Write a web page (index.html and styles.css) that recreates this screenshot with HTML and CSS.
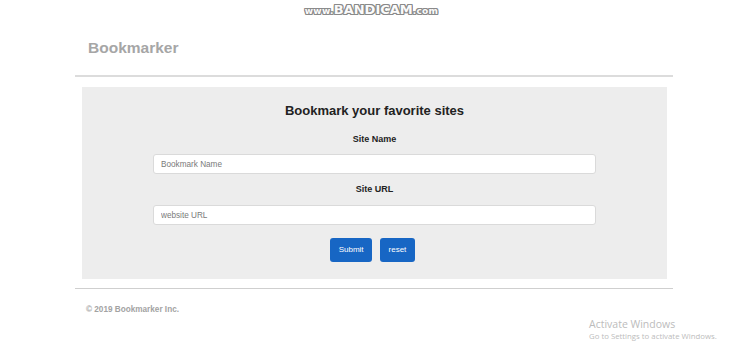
FILE: index.html
```html
<!DOCTYPE html>
<html lang="en">
<head>
<meta charset="utf-8">
<title>Bookmarker</title>
<link rel="stylesheet" href="styles.css">
</head>
<body>
  <div class="watermark"><span class="wm-small">www.</span>BANDICAM<span class="wm-small">.com</span></div>
  <div class="container">
    <header class="header">
      <h3 class="brand">Bookmarker</h3>
    </header>
    <div class="panel">
      <h2 class="panel-title">Bookmark your favorite sites</h2>
      <form class="form">
        <label class="label">Site Name</label>
        <input class="field" type="text" placeholder="Bookmark Name">
        <label class="label">Site URL</label>
        <input class="field" type="text" placeholder="website URL">
        <div class="actions">
          <button type="button" class="btn">Submit</button>
          <button type="button" class="btn">reset</button>
        </div>
      </form>
    </div>
    <footer class="footer">
      <p class="copy">&copy; 2019 Bookmarker Inc.</p>
    </footer>
  </div>
  <div class="activate">
    <div class="act-title">Activate Windows</div>
    <div class="act-sub">Go to Settings to activate Windows.</div>
  </div>
</body>
</html>
```
FILE: styles.css
```css
html, body {
  margin: 0;
  padding: 0;
  background: #ffffff;
  font-family: "Liberation Sans", Arial, sans-serif;
  width: 746px;
  height: 360px;
  overflow: hidden;
}

.watermark {
  position: absolute;
  left: 0;
  right: 0;
  top: 3px;
  text-align: center;
  font-family: "DejaVu Sans", sans-serif;
  font-weight: bold;
  font-size: 13px;
  line-height: 14px;
  color: #fbfbfb;
  text-shadow: -1px -1px 0 #8a8a8a, 1px -1px 0 #8a8a8a, -1px 1px 0 #8a8a8a, 1px 1px 0 #8a8a8a, 0 1px 0 #8a8a8a, 1px 0 0 #8a8a8a, -1px 0 0 #8a8a8a, 0 -1px 0 #8a8a8a;
  padding-right: 3px;
}

.wm-small {
  font-size: 9px;
  letter-spacing: 0.3px;
}

.container {
  width: 598px;
  margin-left: 75px;
}

.header {
  height: 75px;
  border-bottom: 2px solid #dcdcdc;
  padding-left: 13px;
  box-sizing: content-box;
}

.brand {
  margin: 0;
  padding-top: 38px;
  font-size: 15.5px;
  line-height: 20px;
  font-weight: bold;
  color: #a6a6a6;
}

.panel {
  margin: 10px 6px 0 7px;
  height: 192px;
  box-sizing: border-box;
  background: #ededed;
  padding: 16px 71px 0 71px;
  display: flex;
  flex-direction: column;
}

.panel-title {
  margin: 0;
  text-align: center;
  font-size: 13px;
  line-height: 16px;
  font-weight: bold;
  color: #222;
}

.form {
  display: flex;
  flex-direction: column;
}

.label {
  display: block;
  text-align: center;
  font-size: 9px;
  line-height: 12px;
  font-weight: bold;
  color: #222;
  margin-top: 14px;
  margin-bottom: 9px;
}

.label + .field + .label {
  margin-top: 9px;
  margin-bottom: 10px;
}

.field {
  display: block;
  width: 100%;
  height: 20px;
  box-sizing: border-box;
  border: 1px solid #dadada;
  border-radius: 3px;
  background: #fff;
  padding: 0 7px;
  font-family: "Liberation Sans", Arial, sans-serif;
  font-size: 8.2px;
  color: #555;
  outline: none;
}

.field::placeholder {
  color: #7a7a7a;
}

.actions {
  display: flex;
  justify-content: center;
  gap: 8px;
  margin-top: 13px;
  padding-right: 4px;
}

.btn {
  height: 24px;
  padding: 0 8.5px;
  border: none;
  border-radius: 3px;
  background: #1766c4;
  color: #fff;
  font-family: "Liberation Sans", Arial, sans-serif;
  font-size: 8px;
  line-height: 24px;
  cursor: pointer;
}

.footer {
  margin-top: 9px;
  border-top: 1px solid #cfcfcf;
  padding-left: 11px;
}

.copy {
  margin: 0;
  padding-top: 16px;
  font-size: 8.2px;
  line-height: 10px;
  font-weight: bold;
  color: #a3a3a3;
}

.activate {
  position: absolute;
  left: 589px;
  top: 318px;
  font-family: "Open Sans", "Noto Sans", sans-serif;
  color: #bcbcbc;
}

.act-title {
  font-size: 10.5px;
  line-height: 13px;
}

.act-sub {
  font-size: 7.8px;
  line-height: 11px;
}
```
